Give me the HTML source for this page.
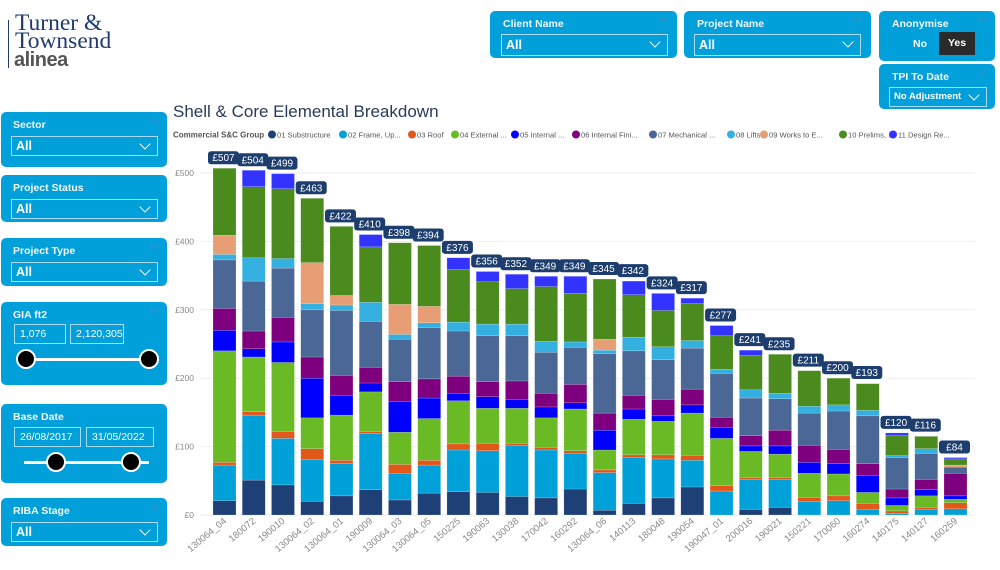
<!DOCTYPE html>
<html><head><meta charset="utf-8"><style>
*{margin:0;padding:0;box-sizing:border-box}
body{width:1000px;height:570px;background:#fff;font-family:"Liberation Sans",sans-serif;position:relative;overflow:hidden}
.card{position:absolute;background:#01a0da;border-radius:5px;color:#fff}
.card .h{position:absolute;left:12px;top:7px;font-size:10.5px;font-weight:bold;color:#f4f8fb}
.card .chev{position:absolute;right:10px;top:4px;width:6px;height:6px;border-right:1px solid #3f8cc0;border-bottom:1px solid #3f8cc0;transform:rotate(45deg)}
.dd{position:absolute;border:1px solid #a9dcf2;font-size:12.5px;font-weight:bold;color:#fff;padding-left:4px;line-height:18px}
.dd:after{content:"";position:absolute;right:8px;top:3px;width:7px;height:7px;border-right:1.5px solid #fff;border-bottom:1.5px solid #fff;transform:rotate(45deg)}
.box{position:absolute;border:1px solid #a9dcf2;font-size:10.5px;color:#fff;padding-left:5px;line-height:18px}
.knob{position:absolute;width:20px;height:20px;border-radius:50%;background:#000;border:2px solid #fff}
.line{position:absolute;height:3px;background:#fff}
</style></head><body>
<div style="position:absolute;left:8px;top:20px;width:1px;height:48px;background:#1f3a6e"></div>
<div style="position:absolute;left:15px;top:14px;font-family:'Liberation Serif',serif;font-size:23.5px;line-height:18px;color:#1f3a6e">Turner &amp;<br>Townsend</div>
<div style="position:absolute;left:14px;top:49px;font-family:'Liberation Sans',sans-serif;font-weight:bold;font-size:20px;color:#555;letter-spacing:-0.5px">alinea</div>

<div class="card" style="left:490px;top:11px;width:187px;height:47px"><div class="h" style="left:13px">Client Name</div><div class="chev"></div><div class="dd" style="left:11px;top:23px;width:167px;height:22px;line-height:20px">All</div></div>
<div class="card" style="left:684px;top:11px;width:187px;height:47px"><div class="h" style="left:13px">Project Name</div><div class="chev"></div><div class="dd" style="left:10px;top:23px;width:167px;height:22px;line-height:20px">All</div></div>
<div class="card" style="left:879px;top:11px;width:116px;height:50px"><div class="h" style="left:13px">Anonymise</div><div class="chev"></div>
<div style="position:absolute;left:34px;top:27px;font-size:10.5px;font-weight:bold">No</div>
<div style="position:absolute;left:60px;top:21px;width:36px;height:23px;background:#2b2b2b;font-size:10.5px;font-weight:bold;text-align:center;line-height:23px">Yes</div></div>
<div class="card" style="left:879px;top:64px;width:116px;height:45px"><div class="h" style="left:13px">TPI To Date</div><div class="chev"></div><div class="dd" style="left:10px;top:23px;width:98px;height:20px;font-size:9.5px;line-height:18px">No Adjustment</div></div>

<div class="card" style="left:1px;top:112px;width:166px;height:55px"><div class="h">Sector</div><div class="chev"></div><div class="dd" style="left:10px;top:24px;width:147px;height:20px">All</div></div>
<div class="card" style="left:1px;top:175px;width:166px;height:47px"><div class="h">Project Status</div><div class="dd" style="left:10px;top:24px;width:147px;height:20px">All</div></div>
<div class="card" style="left:1px;top:238px;width:166px;height:48px"><div class="h">Project Type</div><div class="chev"></div><div class="dd" style="left:10px;top:24px;width:147px;height:20px">All</div></div>
<div class="card" style="left:1px;top:302px;width:166px;height:83px"><div class="h">GIA ft2</div><div class="chev"></div>
<div class="box" style="left:13px;top:22px;width:52px;height:20px">1,076</div><div class="box" style="left:69px;top:22px;width:54px;height:20px">2,120,305</div>
<div class="line" style="left:25px;top:56px;width:123px"></div><div class="knob" style="left:15px;top:47px"></div><div class="knob" style="left:138px;top:47px"></div></div>
<div class="card" style="left:1px;top:404px;width:166px;height:79px"><div class="h">Base Date</div>
<div class="box" style="left:13px;top:23px;width:67px;height:20px">26/08/2017</div><div class="box" style="left:85px;top:23px;width:68px;height:20px">31/05/2022</div>
<div class="line" style="left:23px;top:57px;width:125px"></div><div class="knob" style="left:45px;top:48px"></div><div class="knob" style="left:120px;top:48px"></div></div>
<div class="card" style="left:1px;top:498px;width:166px;height:48px"><div class="h">RIBA Stage</div><div class="chev"></div><div class="dd" style="left:10px;top:24px;width:147px;height:20px">All</div></div>

<div style="position:absolute;left:173px;top:102px;font-size:17px;color:#2a3a5a;font-family:'Liberation Sans',sans-serif">Shell &amp; Core Elemental Breakdown</div>

<svg id="ch" width="1000" height="570" style="position:absolute;left:0;top:0" xmlns="http://www.w3.org/2000/svg" font-family="Liberation Sans, sans-serif">
<text x="173" y="137.5" font-size="8" fill="#555" font-weight="bold">Commercial S&amp;C Group</text>
</svg>
<script>
(function(){
var C=["#1f3f77","#00a0d9","#e2581b","#6aba26","#0000ff","#7f007f","#4a6795","#34b0e0","#e89e74","#4b8a1c","#3333ff"];
var N=["01 Substructure","02 Frame, Up...","03 Roof","04 External ...","05 Internal ...","06 Internal Fini...","07 Mechanical ...","08 Lifts","09 Works to E...","10 Prelims, ...","11 Design Re..."];
var LX=[268,339,408,451,511,572,649,727,760,839,889];
var D=[
["130064_04",507,[21,52,4,163,30,32,71,8,28,98,0]],
["180072",504,[51,95,5,80,12,26,73,34,0,104,24]],
["190010",499,[44,68,10,101,30,36,72,14,0,102,22]],
["130064_02",463,[20,61,16,45,58,31,69,9,60,94,0]],
["130064_01",422,[28,47,5,66,29,29,95,8,14,101,0]],
["190009",410,[37,82,3,58,13,23,67,28,0,81,18]],
["130064_03",398,[22,39,13,47,45,29,62,7,44,90,0]],
["130064_05",394,[32,41,7,61,30,28,75,7,24,89,0]],
["150225",376,[34,61,9,63,11,25,66,13,0,77,17]],
["190063",356,[33,61,11,51,17,22,67,17,0,62,15]],
["130038",352,[27,75,3,51,13,27,66,17,0,52,21]],
["170042",349,[25,70,4,43,16,20,60,16,0,80,15]],
["160292",349,[38,52,4,61,9,27,54,8,0,71,25]],
["130064_06",345,[7,55,4,29,29,25,87,5,16,88,0]],
["140113",342,[17,67,4,52,15,20,65,20,0,62,20]],
["180048",324,[25,57,6,49,8,24,58,19,0,53,25]],
["190054",317,[41,39,7,62,12,23,60,11,0,54,8]],
["190047_01",277,[0,35,8,69,16,15,64,6,0,49,15]],
["200016",241,[8,44,3,38,8,15,55,12,0,50,8]],
["190021",235,[11,41,3,34,12,23,46,8,0,57,0]],
["150221",211,[0,20,6,35,16,25,47,10,0,52,0]],
["170060",200,[0,21,7,32,15,21,56,9,0,39,0]],
["160274",193,[0,8,9,16,25,17,70,8,0,39,0]],
["140175",120,[0,2,4,8,11,13,46,3,0,29,4]],
["140127",116,[0,8,3,17,9,15,38,7,0,18,0]],
["160259",84,[0,9,9,5,5,33,9,0,3,9,2]]];
var s="",Y0=515,K=0.684;
for(var i=0;i<=5;i++){var y=Y0-i*100*K;s+='<line x1="200" x2="975" y1="'+y+'" y2="'+y+'" stroke="#eee"/>';s+='<text x="194" y="'+(y+3)+'" font-size="8.5" fill="#888" text-anchor="end">£'+(i*100)+'</text>';}
for(var j=0;j<11;j++){s+='<circle cx="'+(LX[j]+4)+'" cy="134.5" r="4" fill="'+C[j]+'"/><text x="'+(LX[j]+9)+'" y="137.5" font-size="7.6" fill="#555">'+N[j]+'</text>';}
for(var b=0;b<D.length;b++){var x=213+b*29.24,y=Y0,d=D[b];
for(var k=0;k<11;k++){var h=d[2][k]*K;if(h<=0)continue;y-=h;s+='<rect x="'+x+'" y="'+y+'" width="23" height="'+h+'" fill="'+C[k]+'" stroke="#fff" stroke-opacity="0.35" stroke-width="0.5"/>';}
var tp=Y0-d[1]*K;
s+='<rect x="'+(x-5)+'" y="'+(tp-17)+'" width="31" height="13" rx="3" fill="#1c3d6e"/><text x="'+(x+10.5)+'" y="'+(tp-7)+'" font-size="10" fill="#fff" text-anchor="middle">£'+d[1]+'</text>';
var cx=x+14;s+='<text transform="translate('+cx+',522) rotate(-40)" font-size="9.5" fill="#888" text-anchor="end">'+d[0]+'</text>';}
document.getElementById("ch").insertAdjacentHTML("beforeend",s);
})();
</script>
</body></html>
